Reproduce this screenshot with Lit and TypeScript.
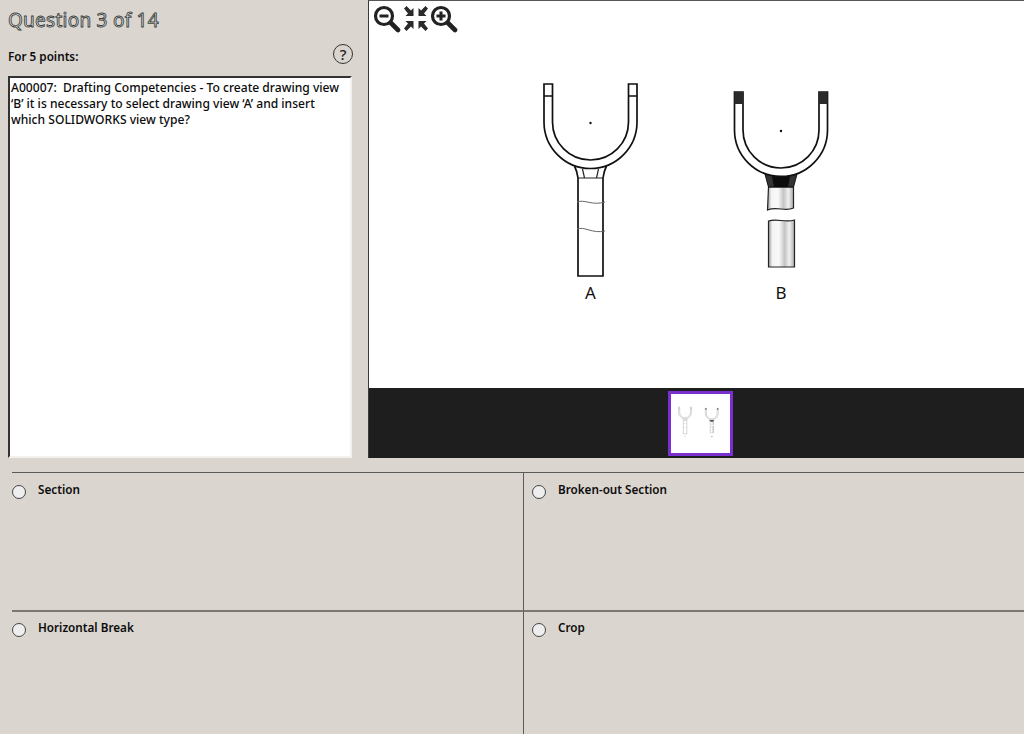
import { LitElement, html, css, svg } from "lit";
import { customElement } from "lit/decorators.js";

function fork(cx: number, topY: number, stemBottom: number, kind: "A" | "B") {
  const oL = cx - 46.5, oR = cx + 46.5, iL = cx - 38, iR = cx + 38;
  const arcY = topY + 38;
  const sL = cx - 12.5, sR = cx + 12.5;
  const shape = `M${oL} ${topY} V${arcY} A46.5 46.5 0 0 0 ${oR} ${arcY} V${topY} H${iR} V${arcY} A38 38 0 0 1 ${iL} ${arcY} V${topY} Z`;
  return kind === "A"
    ? svg`
      <path d="M${cx - 16} ${topY + 82} Q${sL - 1} ${topY + 87} ${sL} ${topY + 94} V${stemBottom} H${sR} V${topY + 94} Q${sR + 1} ${topY + 87} ${cx + 16} ${topY + 82}" fill="#fff" stroke="#111" stroke-width="1.7"/>
      <path d="${shape}" fill="#fff" stroke="#111" stroke-width="1.7"/>
      <path d="M${oL} ${topY + 12} H${iL} M${iR} ${topY + 12} H${oR}" stroke="#111" stroke-width="1.4"/>
      <path d="M${cx - 8} ${topY + 85} L${cx - 6} ${topY + 94} H${cx + 6} L${cx + 8} ${topY + 85} M${sL} ${topY + 94} H${sR}" fill="none" stroke="#222" stroke-width="1.2"/>
      <path d="M${sL - 1} ${topY + 118} C${cx - 6} ${topY + 115} ${cx + 2} ${topY + 122} ${sR + 2} ${topY + 118} M${sL - 1} ${topY + 145} C${cx - 6} ${topY + 142} ${cx + 2} ${topY + 150} ${sR + 2} ${topY + 147}" fill="none" stroke="#666" stroke-width="1"/>
      <circle cx="${cx}" cy="${topY + 39}" r="1.2" fill="#111"/>
      <text class="lbl" x="${cx}" y="299" text-anchor="middle">A</text>`
    : svg`
      <path d="M${sL} ${topY + 95} H${sR} V${topY + 116} C${cx + 4} ${topY + 120} ${cx - 4} ${topY + 114} ${sL - 1} ${topY + 118} Z" fill="url(#stem)" stroke="#222" stroke-width="1.2"/>
      <path d="M${sL} ${topY + 129} C${cx - 4} ${topY + 126} ${cx + 4} ${topY + 131} ${sR + 1} ${topY + 128} V${stemBottom} H${sL} Z" fill="url(#stem)" stroke="#222" stroke-width="1.2"/>
      <path d="M${cx - 16} ${topY + 82} Q${sL - 2} ${topY + 88} ${sL} ${topY + 95} H${sR} Q${sR + 2} ${topY + 88} ${cx + 16} ${topY + 82} Z" fill="#333" stroke="#111" stroke-width="1"/>
      <path d="M${cx - 9} ${topY + 84} H${cx + 9} L${cx + 7} ${topY + 95} H${cx - 7} Z" fill="#0c0c0c"/>
      <path d="${shape}" fill="#fff" stroke="#111" stroke-width="1.7"/>
      <rect x="${oL}" y="${topY}" width="8.5" height="12" fill="#2a2a2a"/>
      <rect x="${iR}" y="${topY}" width="8.5" height="12" fill="#2a2a2a"/>
      <circle cx="${cx}" cy="${topY + 39}" r="1.2" fill="#111"/>
      <text class="lbl" x="${cx}" y="299" text-anchor="middle">B</text>`;
}

function drawing(viewBox: string, cls: string) {
  return html`<svg class="${cls}" viewBox="${viewBox}" aria-label="Drawing views A and B">
    <defs>
      <linearGradient id="stem" x1="0" x2="1" y1="0" y2="0">
        <stop offset="0" stop-color="#999"/><stop offset=".15" stop-color="#f4f4f4"/>
        <stop offset=".4" stop-color="#fafafa"/><stop offset=".62" stop-color="#c4c4c4"/>
        <stop offset=".8" stop-color="#f0f0f0"/><stop offset="1" stop-color="#aaa"/>
      </linearGradient>
    </defs>
    ${fork(590.5, 84, 276, "A")}
    ${fork(781, 92, 267, "B")}
  </svg>`;
}

@customElement("app-root")
export class AppRoot extends LitElement {
  static styles = css`
    :host { display: block; width: 1024px; height: 734px; overflow: hidden; background: #dad5cf;
      font-family: "Noto Sans", "Open Sans", sans-serif; color: #0c0c0c; }
    .top { display: flex; height: 458px; }
    .left { width: 368px; flex: none; box-sizing: border-box; padding: 7px 16px 0 8px; display: flex; flex-direction: column; }
    .title { font-size: 19px; line-height: 26px; font-weight: 400; color: #eeeae4; -webkit-text-stroke: 0.9px #3b4443; margin: 0; letter-spacing: .25px; }
    .points { display: flex; justify-content: space-between; align-items: center; margin-top: 10px; height: 24px; font-size: 11.7px; font-weight: 600; }
    .points-label { margin-top: 2px; }
    .help { width: 20px; height: 20px; margin: -2px -1px 0 0; border: 1.5px solid #333; border-radius: 50%; box-sizing: border-box; display: flex; align-items: center; justify-content: center; font-size: 15px; font-weight: 500; color: #222; }
    .qbox { flex: 1; margin-top: 9px; background: #fff; border: 2px solid #f3f1ee; border-top-color: #333; border-left-color: #333; padding: 2px 0 0 1px; font-size: 12.1px; font-weight: 500; line-height: 16px; }
    .qtext { width: 336px; }
    .right { flex: 1; display: flex; flex-direction: column; border-left: 1px solid #3a3a3a; border-top: 1px solid #555; background: #fff; min-width: 0; }
    .viewer { height: 387px; position: relative; background: #fff; }
    .scene { display: block; width: 655px; height: 387px; }
    .lbl { font: 400 17px "Noto Sans", sans-serif; fill: #111; }
    .tools { position: absolute; left: 4px; top: 2px; display: flex; align-items: center; }
    .tools svg { display: block; }
    .strip { flex: 1; background: #1e1e1e; display: flex; justify-content: center; align-items: center; padding-left: 8px; }
    .thumb { width: 65px; height: 65px; box-sizing: border-box; border: 3px solid #7a2fcf; background: #fff; }
    .mini { display: block; width: 59px; height: 59px; opacity: .7; }
    .opts { margin: 14px 0 0 12px; display: grid; grid-template-columns: 511px 1fr; grid-template-rows: 137px 124px; border-top: 1px solid #5a5a58; }
    .opt { display: flex; align-items: flex-start; gap: 12px; padding: 10px 0 0 0; font-size: 11.7px; font-weight: 600; line-height: 16px; box-sizing: border-box; }
    .opt:nth-child(even) { border-left: 1px solid #5a5a58; padding-left: 8px; }
    .opt:nth-child(n+3) { border-top: 2px solid #7b7872; padding-top: 9px; }
    .radio { width: 14px; height: 14px; box-sizing: border-box; border: 1.6px solid #444; border-radius: 50%; background: #eeeeee; margin-top: 2px; flex: none; }
    .opt span { margin-top: -2px; }
  `;

  render() {
    const opts = ["Section", "Broken-out Section", "Horizontal Break", "Crop"];
    return html`
      <div class="top">
        <section class="left">
          <h1 class="title">Question 3 of 14</h1>
          <div class="points"><span class="points-label">For 5 points:</span><span class="help">?</span></div>
          <div class="qbox"><div class="qtext">A00007:&nbsp; Drafting Competencies - To create drawing view ‘B’ it is necessary to select drawing view ‘A’ and insert which SOLIDWORKS view type?</div></div>
        </section>
        <section class="right">
          <div class="viewer">
            ${drawing("369 1 655 387", "scene")}
            <div class="tools">
              <svg width="30" height="30" viewBox="0 0 30 30"><circle cx="11" cy="13" r="8.5" fill="#fff" stroke="#222" stroke-width="3.2"/><path d="M6.5 13H15.5" stroke="#222" stroke-width="3"/><path d="M18 20L25 27" stroke="#222" stroke-width="4.6" stroke-linecap="round"/></svg>
              <svg width="26" height="30" viewBox="0 0 26 30" fill="#2a2a2a"><path d="M1 5.5L3.5 3L8 7.5L10.5 5V13H2.5L5 10.5Z"/><path d="M25 5.5L22.5 3L18 7.5L15.5 5V13H23.5L21 10.5Z"/><path d="M1 25.5L3.5 28L8 23.5L10.5 26V18H2.5L5 20.5Z"/><path d="M25 25.5L22.5 28L18 23.5L15.5 26V18H23.5L21 20.5Z"/></svg>
              <svg width="30" height="30" viewBox="0 0 30 30"><circle cx="12" cy="13" r="8.5" fill="#fff" stroke="#222" stroke-width="3.2"/><path d="M7.5 13H16.5M12 8.5V17.5" stroke="#222" stroke-width="3"/><path d="M19 20L26 27" stroke="#222" stroke-width="4.6" stroke-linecap="round"/></svg>
            </div>
          </div>
          <div class="strip"><div class="thumb">${drawing("490 -9 421 421", "mini")}</div></div>
        </section>
      </div>
      <div class="opts">
        ${opts.map(o => html`<label class="opt"><i class="radio"></i><span>${o}</span></label>`)}
      </div>
    `;
  }
}
